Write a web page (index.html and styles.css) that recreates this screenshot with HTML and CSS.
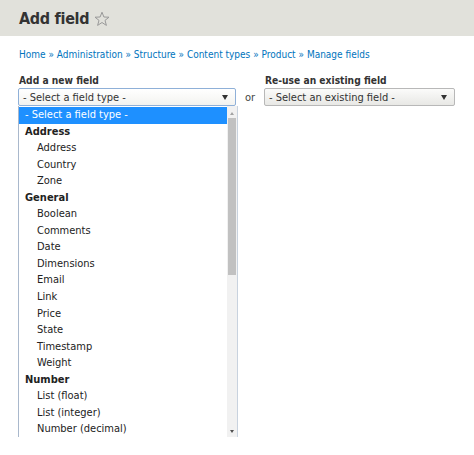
FILE: index.html
```html
<!DOCTYPE html>
<html>
<head>
<meta charset="utf-8">
<link rel="stylesheet" href="styles.css">
</head>
<body>
<div class="header">
  <h1 class="title">Add field</h1>
  <svg class="star" width="16" height="16" viewBox="0 0 16 16"><path d="M8 1.2 L9.9 6 L15 6.2 L11 9.4 L12.4 14.4 L8 11.5 L3.6 14.4 L5 9.4 L1 6.2 L6.1 6 Z" fill="none" stroke="#999" stroke-width="1"/></svg>
</div>
<div class="crumbs">
  <a>Home</a> » <a>Administration</a> » <a>Structure</a> » <a>Content types</a> » <a>Product</a> » <a>Manage fields</a>
</div>
<div class="form">
  <div class="col-left">
    <div class="label">Add a new field</div>
    <div class="picker focused">
      <span>- Select a field type -</span>
      <span class="caret"></span>
    </div>
    <div class="fieldmenu">
      <div class="menu-body">
        <div class="mi hl">- Select a field type -</div>
        <div class="mg">Address</div>
        <div class="mi">Address</div>
        <div class="mi">Country</div>
        <div class="mi">Zone</div>
        <div class="mg">General</div>
        <div class="mi">Boolean</div>
        <div class="mi">Comments</div>
        <div class="mi">Date</div>
        <div class="mi">Dimensions</div>
        <div class="mi">Email</div>
        <div class="mi">Link</div>
        <div class="mi">Price</div>
        <div class="mi">State</div>
        <div class="mi">Timestamp</div>
        <div class="mi">Weight</div>
        <div class="mg">Number</div>
        <div class="mi">List (float)</div>
        <div class="mi">List (integer)</div>
        <div class="mi">Number (decimal)</div>
      </div>
      <div class="vscroll">
        <div class="vs-btn vs-up"></div>
        <div class="vs-track"><div class="vs-thumb"></div></div>
        <div class="vs-btn vs-down"></div>
      </div>
    </div>
  </div>
  <div class="or">or</div>
  <div class="col-right">
    <div class="label">Re-use an existing field</div>
    <div class="picker plain">
      <span>- Select an existing field -</span>
      <span class="caret"></span>
    </div>
  </div>
</div>
</body>
</html>
```
FILE: styles.css
```css
body {
  margin: 0;
  background: #fff;
  font-family: "DejaVu Sans Condensed", "DejaVu Sans", sans-serif;
  color: #333;
}
.header {
  background: #e1e1db;
  height: 36px;
  display: flex;
  align-items: center;
  padding-left: 19px;
  gap: 5px;
}
.title {
  margin: 0;
  font-size: 16px;
  font-weight: bold;
  color: #333;
  letter-spacing: -0.3px;
}
.star {
  margin-top: 1px;
}
.crumbs {
  padding: 11px 0 0 19px;
  font-size: 10px;
  line-height: 16px;
  color: #0074bd;
}
.crumbs a {
  color: #0074bd;
}
.form {
  display: flex;
  padding: 11px 0 0 18px;
  align-items: flex-start;
}
.col-left {
  width: 220px;
}
.label {
  font-size: 10.2px;
  font-weight: bold;
  line-height: 14px;
  padding-left: 1px;
  color: #333;
}
.picker {
  box-sizing: border-box;
  height: 18px;
  display: flex;
  align-items: center;
  justify-content: space-between;
  padding: 0 7px 0 4px;
  font-size: 11px;
  color: #333;
  border: 1px solid #b8b8b8;
  border-radius: 2px;
}
.picker.focused {
  width: 218px;
  border-color: #8fb0d8;
  background: linear-gradient(#ffffff, #f3f3f0);
}
.picker.plain {
  background: linear-gradient(#fbfbfa, #e8e8e5);
}
.caret {
  width: 0;
  height: 0;
  border-left: 3.5px solid transparent;
  border-right: 3.5px solid transparent;
  border-top: 5px solid #333;
}
.or {
  box-sizing: border-box;
  width: 26px;
  font-size: 11px;
  color: #444;
  padding: 17px 0 0 7px;
}
.col-right {
  width: 191px;
}
.fieldmenu {
  width: 220px;
  height: 331px;
  box-sizing: border-box;
  border-left: 1px solid #a9b8cc;
  border-right: 1px solid #c8d2de;
  background: #fff;
  display: flex;
  overflow: hidden;
}
.menu-body {
  flex: 1;
  padding-top: 1px;
}
.mi, .mg {
  height: 16.55px;
  line-height: 16.55px;
  font-size: 11px;
  white-space: nowrap;
  color: #222;
}
.mg {
  font-weight: bold;
  padding-left: 6px;
}
.mi {
  padding-left: 18px;
}
.mi.hl {
  background: #1e90ff;
  color: #fff;
  padding-left: 6px;
}
.vscroll {
  width: 10px;
  background: #f1f1f1;
  display: flex;
  flex-direction: column;
}
.vs-btn {
  height: 10px;
  display: flex;
  align-items: center;
  justify-content: center;
}
.vs-btn::after {
  content: "";
  width: 0;
  height: 0;
  border-left: 2.5px solid transparent;
  border-right: 2.5px solid transparent;
}
.vs-up {
  margin-top: 2px;
}
.vs-up::after {
  border-bottom: 3px solid #a3a3a3;
}
.vs-down::after {
  border-top: 3px solid #505050;
}
.vs-down {
  margin-bottom: 1px;
}
.vs-track {
  flex: 1;
  padding: 0 1px;
}
.vs-thumb {
  height: 157px;
  background: #c1c1c1;
}
```
